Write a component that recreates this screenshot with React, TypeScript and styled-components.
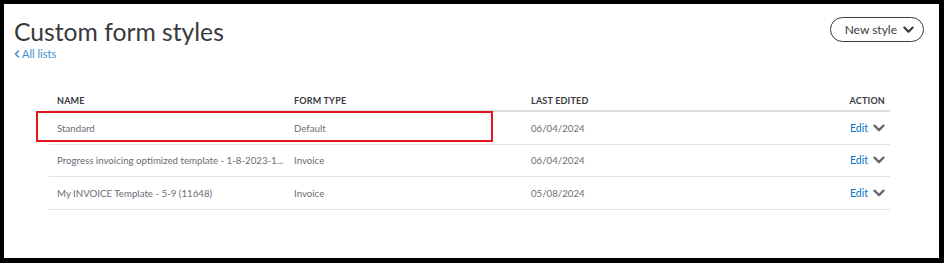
import React from "react";
import styled, { createGlobalStyle } from "styled-components";

const Global = createGlobalStyle`
  html, body { margin: 0; padding: 0; background: #000; }
  body { font-family: Lato, "Open Sans", Arial, sans-serif; }
  * { box-sizing: border-box; }
`;

const Frame = styled.div`
  width: 944px;
  height: 263px;
  border-style: solid;
  border-color: #000;
  border-width: 4px 5px 5px 4px;
  background: #fff;
  display: flex;
  flex-direction: column;
`;

const TopBar = styled.div`
  display: flex;
  justify-content: space-between;
  align-items: flex-start;
  padding: 13px 15px 0 10px;
`;

const TitleBlock = styled.div`
  display: flex;
  flex-direction: column;
`;

const Title = styled.h1`
  margin: 0;
  font-family: Lato, Arial, sans-serif;
  font-weight: 400;
  font-size: 24.7px;
  line-height: 30px;
  color: #393a3d;
`;

const BackLink = styled.a`
  display: flex;
  align-items: center;
  gap: 2px;
  font-size: 11px;
  line-height: 13px;
  color: #3f8fd2;
  text-decoration: none;
`;

const PillButton = styled.button`
  display: flex;
  align-items: center;
  gap: 6px;
  height: 25px;
  padding: 0 9px 0 14px;
  border: 1.5px solid #393a3d;
  border-radius: 13px;
  background: #fff;
  font-family: Lato, Arial, sans-serif;
  font-size: 12px;
  color: #393a3d;
`;

const TableWrap = styled.div`
  position: relative;
  margin: 33px 49px 0 45px;
`;

const Row = styled.div<{ $head?: boolean }>`
  display: grid;
  grid-template-columns: 237px 237px 237px 1fr;
  align-items: center;
  height: ${(p) => (p.$head ? "19px" : "32.5px")};
  border-bottom: ${(p) => (p.$head ? "2px solid #dcdee1" : "1px solid #e1e3e6")};
  padding: 0 5px 0 8px;
`;

const HeadCell = styled.div<{ $right?: boolean }>`
  font-size: 9px;
  font-weight: 700;
  color: #393a3d;
  letter-spacing: 0.2px;
  text-align: ${(p) => (p.$right ? "right" : "left")};
  padding-bottom: 2px;
`;

const Cell = styled.div`
  font-size: 9.7px;
  color: #6b6c72;
  white-space: nowrap;
`;

const ActionCell = styled.div`
  display: flex;
  justify-content: flex-end;
  align-items: center;
  gap: 5px;
`;

const EditLink = styled.a`
  font-size: 10.5px;
  color: #0077c5;
  text-decoration: none;
`;

const Highlight = styled.div`
  position: absolute;
  left: -13px;
  top: 18px;
  width: 457px;
  height: 31px;
  border: 2px solid #e4151c;
  pointer-events: none;
`;

const Chevron = ({ size = 12, color = "#6b6c72" }: { size?: number; color?: string }) => (
  <svg width={size} height={size * 0.7} viewBox="0 0 12 8">
    <path d="M1.5 1.5 L6 6 L10.5 1.5" fill="none" stroke={color} strokeWidth="2.4" strokeLinecap="round" strokeLinejoin="round" />
  </svg>
);

const rows = [
  { name: "Standard", type: "Default", date: "06/04/2024" },
  { name: "Progress invoicing optimized template - 1-8-2023-1...", type: "Invoice", date: "06/04/2024" },
  { name: "My INVOICE Template - 5-9 (11648)", type: "Invoice", date: "05/08/2024" },
];

export default function App() {
  return (
    <>
      <Global />
      <Frame>
        <TopBar>
          <TitleBlock>
            <Title>Custom form styles</Title>
            <BackLink href="#">
              <svg width="6" height="8" viewBox="0 0 6 8">
                <path d="M4.5 1 L1.5 4 L4.5 7" fill="none" stroke="#3f8fd2" strokeWidth="1.6" strokeLinecap="round" strokeLinejoin="round" />
              </svg>
              All lists
            </BackLink>
          </TitleBlock>
          <PillButton>
            New style
            <Chevron size={11} color="#393a3d" />
          </PillButton>
        </TopBar>
        <TableWrap>
          <Row $head>
            <HeadCell>NAME</HeadCell>
            <HeadCell>FORM TYPE</HeadCell>
            <HeadCell>LAST EDITED</HeadCell>
            <HeadCell $right>ACTION</HeadCell>
          </Row>
          {rows.map((r) => (
            <Row key={r.name}>
              <Cell>{r.name}</Cell>
              <Cell>{r.type}</Cell>
              <Cell>{r.date}</Cell>
              <ActionCell>
                <EditLink href="#">Edit</EditLink>
                <Chevron />
              </ActionCell>
            </Row>
          ))}
          <Highlight />
        </TableWrap>
      </Frame>
    </>
  );
}
